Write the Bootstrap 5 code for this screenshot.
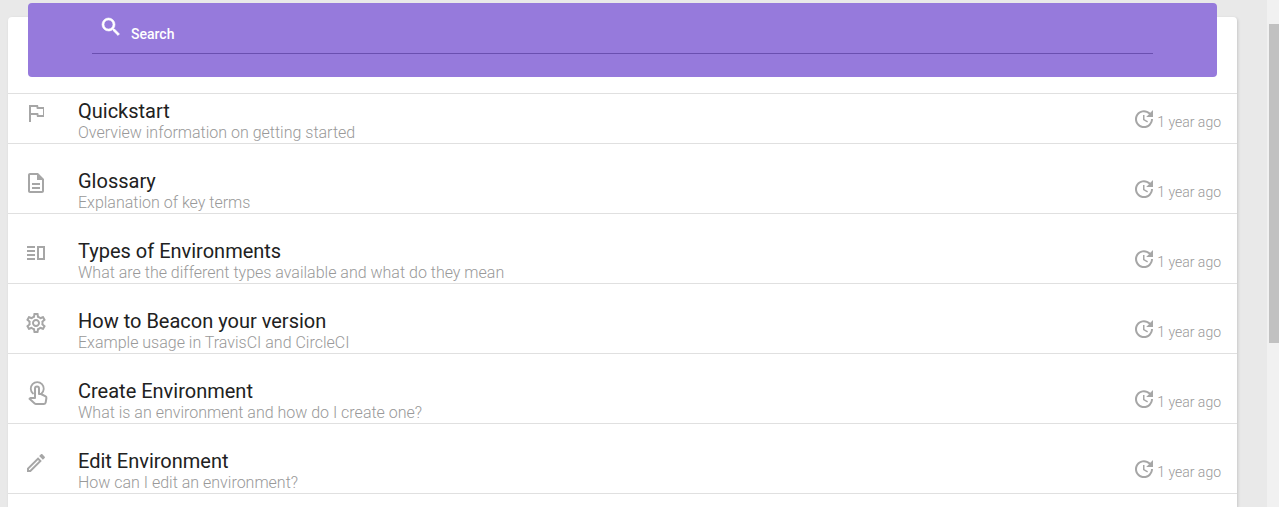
<!DOCTYPE html>
<html lang="en"><head><meta charset="utf-8"><title>Docs</title>
<link href="https://cdn.jsdelivr.net/npm/bootstrap@5.3.0/dist/css/bootstrap.min.css" rel="stylesheet">
<style>
html,body{height:507px;overflow:hidden;margin:0}
body{background:#e9e9e9;font-family:Roboto,sans-serif}
.shell{height:507px}
.pane{width:1267px;padding:17px 30px 0 8px}
.sheet{background:#fff;border-radius:4px 4px 0 0;box-shadow:1px 1px 3px rgba(0,0,0,.15);height:490px;position:relative;padding-top:76px}
.searchbar{position:absolute;left:20px;right:20px;top:-14px;height:74px;background:#967adc;border-radius:4px;padding:0 64px}
.searchline{height:51px;border-bottom:1px solid #6a4fb0;color:#fff;font-weight:500;font-size:14px}
.searchline svg{width:24px;height:24px;margin:12px 8px 0 7px;flex:none}
.searchline span{margin-top:23px;line-height:16px}
.rowitem{height:70px;border-top:1px solid #e0e0e0}
.rowitem.short{height:50px}
.rowitem.tail{height:14px}
.glyph{width:70px;padding-left:16px;flex:none;padding-top:9px}
.short .glyph{padding-top:0;margin-top:-11px}
.glyph svg{width:24px;height:24px;display:block;overflow:visible}
.copy{padding-top:23px}
.short .copy{padding-top:3px}
.itemtitle{font-size:20px;line-height:24px;color:#212121}
.itemsub{font-size:16px;font-weight:300;line-height:18px;margin-top:1px;color:#999}
.stamp{font-size:14px;font-weight:300;color:#999;padding-right:16px;line-height:18px;padding-top:26px}
.short .stamp{padding-top:6px}
.stamp svg{width:24px;height:24px;margin-right:1px;position:relative;top:-3px}
.rail{width:12px;background:#f1f1f1;padding-left:2px}
.thumb{height:319px;margin-top:24px;background:#c1c1c1}
</style></head><body>
<svg width="0" height="0" class="position-absolute"><defs><symbol id="clk" viewBox="0 0 24 24"><path d="M21 10.12h-6.78l2.74-2.82c-2.73-2.7-7.15-2.8-9.88-.1-2.73 2.71-2.73 7.08 0 9.79s7.15 2.71 9.88 0C18.32 15.65 19 14.08 19 12.1h2c0 1.98-.88 4.55-2.64 6.29-3.51 3.48-9.21 3.48-12.72 0-3.5-3.47-3.53-9.11-.02-12.58s9.14-3.47 12.65 0L21 3v7.12zM12.5 8v4.25l3.5 2.08-.72 1.21L11 13V8h1.5z" fill="#a6a6a6"/></symbol></defs></svg>
<div class="shell d-flex">
<div class="pane flex-grow-0">
<div class="sheet">
<div class="searchbar">
<div class="searchline d-flex align-items-start">
<svg viewBox="0 0 24 24" fill="#fff" stroke="#fff" stroke-width=".6"><path d="M15.5 14h-.79l-.28-.27A6.47 6.47 0 0 0 16 9.5 6.5 6.5 0 1 0 9.5 16c1.61 0 3.09-.59 4.23-1.57l.27.28v.79l5 4.99L20.49 19l-4.99-5zm-6 0C7.01 14 5 11.99 5 9.5S7.01 5 9.5 5 14 7.01 14 9.5 11.99 14 9.5 14z"/></svg>
<span>Search</span>
</div>
</div>

<div class="rowitem short d-flex align-items-center">
<div class="glyph"><svg viewBox="0 0 24 24" fill="#a6a6a6"><path d="M14.4 6L14 4H5v17h2v-7h5.6l.4 2h7V6h-5.6zM19 14h-4.4l-.4-2H7V6h5.4l.4 2H19v6z"/></svg></div>
<div class="copy flex-grow-1"><div class="itemtitle">Quickstart</div><div class="itemsub">Overview information on getting started</div></div>
<div class="stamp d-flex align-items-center"><svg><use href="#clk"/></svg>1 year ago</div>
</div>

<div class="rowitem d-flex align-items-center">
<div class="glyph"><svg viewBox="0 0 24 24" fill="#a6a6a6"><path d="M8 16h8v2H8zm0-4h8v2H8zm6-10H6c-1.1 0-2 .9-2 2v16c0 1.1.89 2 1.99 2H18c1.1 0 2-.9 2-2V8l-6-6zm4 18H6V4h7v5h5v11z"/></svg></div>
<div class="copy flex-grow-1"><div class="itemtitle">Glossary</div><div class="itemsub">Explanation of key terms</div></div>
<div class="stamp d-flex align-items-center"><svg><use href="#clk"/></svg>1 year ago</div>
</div>

<div class="rowitem d-flex align-items-center">
<div class="glyph"><svg viewBox="0 0 24 24" fill="#a6a6a6"><path fill-rule="evenodd" d="M3 5h8v2H3zm0 4h8v2H3zm0 4h8v2H3zm0 4h8v2H3zM13 5h8v14h-8zm2 2v10h4V7z"/></svg></div>
<div class="copy flex-grow-1"><div class="itemtitle">Types of Environments</div><div class="itemsub">What are the different types available and what do they mean</div></div>
<div class="stamp d-flex align-items-center"><svg><use href="#clk"/></svg>1 year ago</div>
</div>

<div class="rowitem d-flex align-items-center">
<div class="glyph"><svg viewBox="0 0 24 24" fill="#a6a6a6"><path d="M19.43 12.98c.04-.32.07-.64.07-.98s-.03-.66-.07-.98l2.11-1.65c.19-.15.24-.42.12-.64l-2-3.46c-.12-.22-.39-.3-.61-.22l-2.49 1c-.52-.4-1.08-.73-1.69-.98l-.38-2.65C14.46 2.18 14.25 2 14 2h-4c-.25 0-.46.18-.49.42l-.38 2.65c-.61.25-1.17.59-1.69.98l-2.49-1c-.23-.09-.49 0-.61.22l-2 3.46c-.13.22-.07.49.12.64l2.11 1.65c-.04.32-.07.65-.07.98s.03.66.07.98l-2.11 1.65c-.19.15-.24.42-.12.64l2 3.46c.12.22.39.3.61.22l2.49-1c.52.4 1.08.73 1.69.98l.38 2.65c.03.24.24.42.49.42h4c.25 0 .46-.18.49-.42l.38-2.65c.61-.25 1.17-.59 1.69-.98l2.49 1c.23.09.49 0 .61-.22l2-3.46c.12-.22.07-.49-.12-.64l-2.11-1.65zm-1.98-1.71c.04.31.05.52.05.73 0 .21-.02.43-.05.73l-.14 1.13.89.7 1.08.84-.7 1.21-1.27-.51-1.04-.42-.9.68c-.43.32-.84.56-1.25.73l-1.06.43-.16 1.13-.2 1.35h-1.4l-.19-1.35-.16-1.13-1.06-.43c-.43-.18-.83-.41-1.23-.71l-.91-.7-1.06.43-1.27.51-.7-1.21 1.08-.84.89-.7-.14-1.13c-.03-.31-.05-.54-.05-.74s.02-.43.05-.73l.14-1.13-.89-.7-1.08-.84.7-1.21 1.27.51 1.04.42.9-.68c.43-.32.84-.56 1.25-.73l1.06-.43.16-1.13.2-1.35h1.39l.19 1.35.16 1.13 1.06.43c.43.18.83.41 1.23.71l.91.7 1.06-.43 1.27-.51.7 1.21-1.07.85-.89.7.14 1.13zM12 8c-2.21 0-4 1.79-4 4s1.79 4 4 4 4-1.79 4-4-1.79-4-4-4zm0 6c-1.1 0-2-.9-2-2s.9-2 2-2 2 .9 2 2-.9 2-2 2z"/></svg></div>
<div class="copy flex-grow-1"><div class="itemtitle">How to Beacon your version</div><div class="itemsub">Example usage in TravisCI and CircleCI</div></div>
<div class="stamp d-flex align-items-center"><svg><use href="#clk"/></svg>1 year ago</div>
</div>

<div class="rowitem d-flex align-items-center">
<div class="glyph"><svg viewBox="0 0 24 24" fill="none" stroke="#a6a6a6" stroke-width="2" stroke-linejoin="round" stroke-linecap="round"><path d="M9 12.5a6.500 6.500 0 1 1 8.500 0" stroke-width="1.800"/><path d="M11 17V7.500a2 2 0 0 1 4 0V13h2l4.600 2.400c.6.300.9.900.8 1.600l-.7 4.400c-.1.800-.8 1.600-1.700 1.600H12c-.5 0-1-.2-1.300-.6L5.500 17.800l1-.9z"/></svg></div>
<div class="copy flex-grow-1"><div class="itemtitle">Create Environment</div><div class="itemsub">What is an environment and how do I create one?</div></div>
<div class="stamp d-flex align-items-center"><svg><use href="#clk"/></svg>1 year ago</div>
</div>

<div class="rowitem d-flex align-items-center">
<div class="glyph"><svg viewBox="0 0 24 24" fill="#a6a6a6"><path d="M14.06 9.02l.92.92L5.92 19H5v-.92l9.06-9.06M17.66 3c-.25 0-.51.1-.7.29l-1.83 1.83 3.75 3.75 1.83-1.83c.39-.39.39-1.02 0-1.41l-2.34-2.34c-.2-.2-.45-.29-.71-.29zm-3.6 3.19L3 17.25V21h3.75L17.81 9.94l-3.75-3.75z"/></svg></div>
<div class="copy flex-grow-1"><div class="itemtitle">Edit Environment</div><div class="itemsub">How can I edit an environment?</div></div>
<div class="stamp d-flex align-items-center"><svg><use href="#clk"/></svg>1 year ago</div>
</div>

<div class="rowitem tail"></div>
</div>
</div>
<div class="rail"><div class="thumb"></div></div>
</div>
<script src="https://cdn.jsdelivr.net/npm/bootstrap@5.3.0/dist/js/bootstrap.bundle.min.js"></script>
</body></html>
